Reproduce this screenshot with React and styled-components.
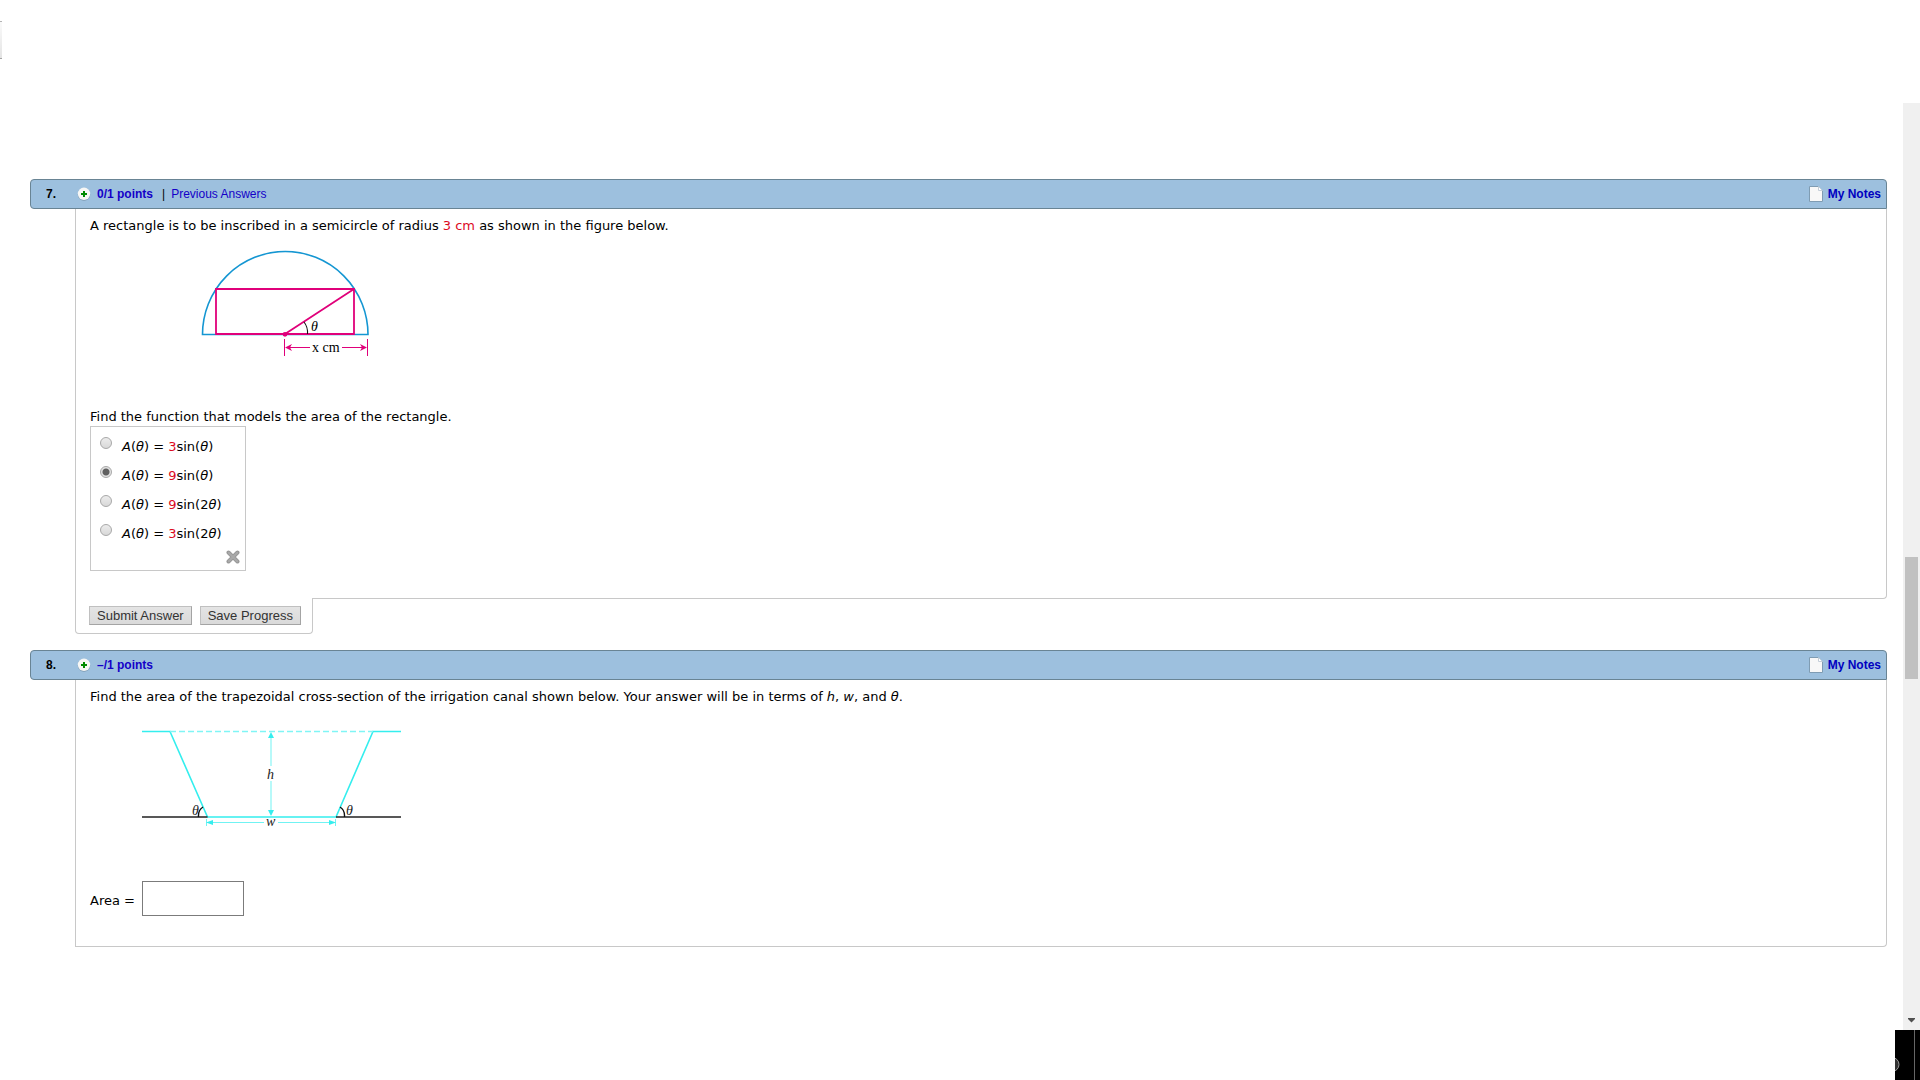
import React, { useState } from 'react';
import styled, { createGlobalStyle } from 'styled-components';

const GlobalStyle = createGlobalStyle`
  * {
    box-sizing: border-box;
  }

  body {
    margin: 0;
    background: #fff;
    color: #000;
    font-family: Verdana, 'DejaVu Sans', sans-serif;
    font-size: 13px;
    line-height: 19px;
  }
`;

const Page = styled.div`
  display: flex;
  flex-direction: column;
  min-height: 100vh;
`;

const TopStrip = styled.header`
  height: 103px;
  padding-top: 21px;
`;

const TabEdge = styled.div`
  width: 2px;
  height: 38px;
  background: linear-gradient(#fafafa, #e4e4e4);
  border-top: 1px solid #b4b4b4;
  border-bottom: 1px solid #a4a4a4;
`;

const Middle = styled.div`
  display: flex;
  flex: 1;
`;

const Questions = styled.main`
  flex: 1;
  min-width: 0;
  padding: 76px 16px 0 30px;
`;

const ScrollTrack = styled.div`
  display: flex;
  flex-direction: column;
  justify-content: space-between;
  align-items: center;
  width: 17px;
  padding: 454px 0 7px;
  background: #f0f0f0;
`;

const ScrollThumb = styled.div`
  width: 13px;
  height: 122px;
  background: #c1c1c1;
`;

const BottomStrip = styled.footer`
  display: flex;
  justify-content: flex-end;
  height: 50px;
`;

const Tray = styled.div`
  width: 25px;
  background: #000;
`;

const Question = styled.section`
  margin-bottom: 16px;
`;

const QuestionBar = styled.div`
  display: flex;
  align-items: center;
  height: 30px;
  padding: 0 5px 0 15px;
  background: #9dc0de;
  border: 1px solid #698494;
  border-radius: 4px 4px 0 4px;
  font-family: Arial, 'Liberation Sans', sans-serif;
  font-size: 12px;
`;

const Number = styled.strong`
  width: 31px;
`;

const BarLink = styled.a`
  display: flex;
  align-items: center;
  gap: 6px;
  color: #1400c8;
  font-weight: ${({ $bold }) => ($bold ? 700 : 400)};
  text-decoration: none;
`;

const Divider = styled.span`
  margin: 0 6px 0 9px;
`;

const Notes = styled(BarLink)`
  gap: 5px;
  margin-left: auto;
  color: #0000c0;
`;

const Body = styled.div`
  margin-left: 45px;
  padding: 7px 14px ${({ $bottom }) => $bottom}px;
  border: 1px solid #c8c8c8;
  border-top: 0;
  border-bottom-right-radius: 4px;
`;

const Text = styled.p`
  margin: 0;
`;

const Red = styled.span`
  color: #dc0a1e;
`;

const Figure = styled.svg`
  display: block;
  margin-left: ${({ $left }) => $left}px;
`;

const Choices = styled.fieldset`
  width: 156px;
  min-width: 0;
  margin: 0;
  padding: 5px 5px 6px 9px;
  border: 1px solid #c8c8c8;
`;

const Choice = styled.label`
  display: flex;
  align-items: flex-start;
  height: 29px;
  padding-top: 5px;
  line-height: 20px;
  white-space: pre;
`;

const Radio = styled.input`
  appearance: none;
  flex: none;
  width: 12px;
  height: 12px;
  margin: 0 10px 0 0;
  border: 1px solid #a8a8a8;
  border-radius: 50%;
  background: linear-gradient(#ececec, #d8d8d8);

  &:checked {
    background: radial-gradient(circle, #606060 3px, #e2e2e2 4px);
  }
`;

const Mark = styled.svg`
  display: block;
  margin: 2px 0 0 auto;
`;

const Actions = styled.div`
  position: relative;
  display: flex;
  gap: 8px;
  width: 238px;
  height: 36px;
  margin: -1px 0 0 45px;
  padding: 8px 13px;
  background: #fff;
  border: 1px solid #c8c8c8;
  border-top: 0;
  border-radius: 0 0 4px 4px;
`;

const Button = styled.button`
  height: 19px;
  padding: 0 7px;
  border: 1px solid #c0c0c0;
  border-right-color: #a4a4a4;
  border-bottom-color: #a4a4a4;
  background: linear-gradient(#e4e4e4, #dadada);
  color: #333;
  font-family: Arial, 'Liberation Sans', sans-serif;
  font-size: 13px;
  line-height: 17px;
  white-space: nowrap;
`;

const AnswerRow = styled.div`
  display: flex;
  align-items: center;
  gap: 7px;
`;

const AnswerLabel = styled.label`
  padding-top: 4px;
`;

const AnswerInput = styled.input`
  width: 102px;
  height: 35px;
  padding: 2px 6px;
  border: 1px solid #7b7b7b;
  border-radius: 0;
  font: inherit;
`;

const PlusIcon = () => (
  <svg width="14" height="14" viewBox="0 0 14 14" aria-hidden="true">
    <circle cx="7" cy="7.6" r="6.2" fill="#7c99b0" />
    <circle cx="7" cy="6.8" r="6.2" fill="#f7f7f5" />
    <path d="M7 4v6M4 7h6" stroke="#008a00" strokeWidth="2" />
  </svg>
);

const NoteIcon = () => (
  <svg width="14" height="16" viewBox="0 0 14 16" aria-hidden="true">
    <path d="M.5.5h9l4 4v11H.5z" fill="#f8f8f8" stroke="#7f9cb3" />
    <path d="M9.5.5v4h4" fill="#fff" stroke="#c4ced8" />
  </svg>
);

const WrongIcon = () => (
  <Mark width="14" height="14" viewBox="0 0 14 14" role="img" aria-label="Incorrect">
    <path d="M2.5 2.5l9 9M11.5 2.5l-9 9" stroke="#999" strokeWidth="4" strokeLinecap="round" />
    <path d="M2.8 2.8l8.4 8.4M11.2 2.8l-8.4 8.4" stroke="#aaa" strokeWidth="2" strokeLinecap="round" />
  </Mark>
);

const SemicircleFigure = () => (
  <Figure $left={103} width="190" height="172" viewBox="193 235 190 172">
    <path d="M202.5 334.5a82.75 83 0 0 1 165.5 0z" fill="none" stroke="#1496d2" strokeWidth="1.6" />
    <path d="M216 289h138v45H216zM285 334l69-45" fill="none" stroke="#e0007a" strokeWidth="1.8" />
    <circle cx="285" cy="334.3" r="2.4" fill="#e0007a" />
    <path d="M304 322q4 5 3.5 12" fill="none" stroke="#111" strokeWidth="1.1" />
    <text x="311" y="331" fontFamily="'Liberation Serif', serif" fontSize="14" fontStyle="italic">θ</text>
    <path d="M284.5 339v17M367.5 339v17M286 347.5h24M342 347.5h24" stroke="#e0007a" />
    <path d="M285 347.5l7-3.5-2 3.5 2 3.5zM367 347.5l-7-3.5 2 3.5-2 3.5z" fill="#e0007a" />
    <text x="312" y="352" fontFamily="'Liberation Serif', serif" fontSize="14">x cm</text>
  </Figure>
);

const CanalFigure = () => (
  <Figure $left={52} width="260" height="175" viewBox="142 706 260 175">
    <g fill="none" stroke="#34eeee">
      <path d="M142 731.5h28l37.5 85.5h128.5l37-85.5h28" strokeWidth="1.6" />
      <path d="M170 731.5h203" strokeDasharray="6 3" stroke="#80f5f5" strokeWidth="1.4" />
      <path d="M271 734v32M271 781v33M208 822.5h56M278 822.5h56M206.5 819v7M335.5 819v7" stroke="#70f3f3" />
    </g>
    <path d="M271 732l-3 6h6zM271 816l-3-6h6zM206 822.5l7-2.5v5zM336 822.5l-7-2.5v5z" fill="#34eeee" />
    <path d="M142 817h65.5M336 817h65" stroke="#222" strokeWidth="1.6" />
    <path d="M203 807q-5 3-4.5 10M340 807q5 3 4.5 10" fill="none" stroke="#111" strokeWidth="1.4" />
    <g fontFamily="'Liberation Serif', serif" fontSize="14" fontStyle="italic" fill="#222">
      <text x="267" y="779">h</text>
      <text x="266" y="826">w</text>
      <text x="192" y="815">θ</text>
      <text x="346" y="815">θ</text>
    </g>
  </Figure>
);

const ScrollArrow = () => (
  <svg width="9" height="5" viewBox="0 0 9 5" aria-hidden="true">
    <path d="M1 0h7v1L4.5 4.5 1 1z" fill="#505050" />
  </svg>
);

const choices = [
  { factor: '3', angle: '' },
  { factor: '9', angle: '' },
  { factor: '9', angle: '2' },
  { factor: '3', angle: '2' },
];

const QuestionHeader = ({ number, points, answered }) => (
  <QuestionBar>
    <Number>{number}.</Number>
    <BarLink href="#points" $bold>
      <PlusIcon />
      {points} points
    </BarLink>
    {answered && (
      <>
        <Divider>|</Divider>
        <BarLink href="#previous">Previous Answers</BarLink>
      </>
    )}
    <Notes href="#notes" $bold>
      <NoteIcon />
      My Notes
    </Notes>
  </QuestionBar>
);

const App = () => {
  const [selected, setSelected] = useState(1);
  const [area, setArea] = useState('');

  return (
    <Page>
      <GlobalStyle />
      <TopStrip>
        <TabEdge />
      </TopStrip>
      <Middle>
        <Questions>
          <Question>
            <QuestionHeader number={7} points="0/1" answered />
            <Body $bottom={27}>
              <Text>
                A rectangle is to be inscribed in a semicircle of radius <Red>3 cm</Red> as shown in the figure below.
              </Text>
              <SemicircleFigure />
              <Text>Find the function that models the area of the rectangle.</Text>
              <Choices aria-label="Area function">
                {choices.map(({ factor, angle }, index) => (
                  <Choice key={index}>
                    <Radio
                      type="radio"
                      name="area-function"
                      checked={selected === index}
                      onChange={() => setSelected(index)}
                    />
                    <span>
                      <i>A</i>(<i>θ</i>) = <Red>{factor}</Red>sin({angle}<i>θ</i>)
                    </span>
                  </Choice>
                ))}
                <WrongIcon />
              </Choices>
            </Body>
            <Actions>
              <Button type="button">Submit Answer</Button>
              <Button type="button">Save Progress</Button>
            </Actions>
          </Question>
          <Question>
            <QuestionHeader number={8} points="–/1" />
            <Body $bottom={30}>
              <Text>
                Find the area of the trapezoidal cross-section of the irrigation canal shown below. Your answer will be
                in terms of <i>h</i>, <i>w</i>, and <i>θ</i>.
              </Text>
              <CanalFigure />
              <AnswerRow>
                <AnswerLabel htmlFor="area">Area =</AnswerLabel>
                <AnswerInput id="area" type="text" value={area} onChange={(e) => setArea(e.target.value)} />
              </AnswerRow>
            </Body>
          </Question>
        </Questions>
        <ScrollTrack>
          <ScrollThumb />
          <ScrollArrow />
        </ScrollTrack>
      </Middle>
      <BottomStrip>
        <Tray>
          <svg width="25" height="50" viewBox="0 0 25 50" aria-hidden="true">
            <circle cx="-3" cy="34.5" r="7" fill="#333" stroke="#999" />
            <path d="M19.5 0v50" stroke="#666" />
          </svg>
        </Tray>
      </BottomStrip>
    </Page>
  );
};

export default App;
